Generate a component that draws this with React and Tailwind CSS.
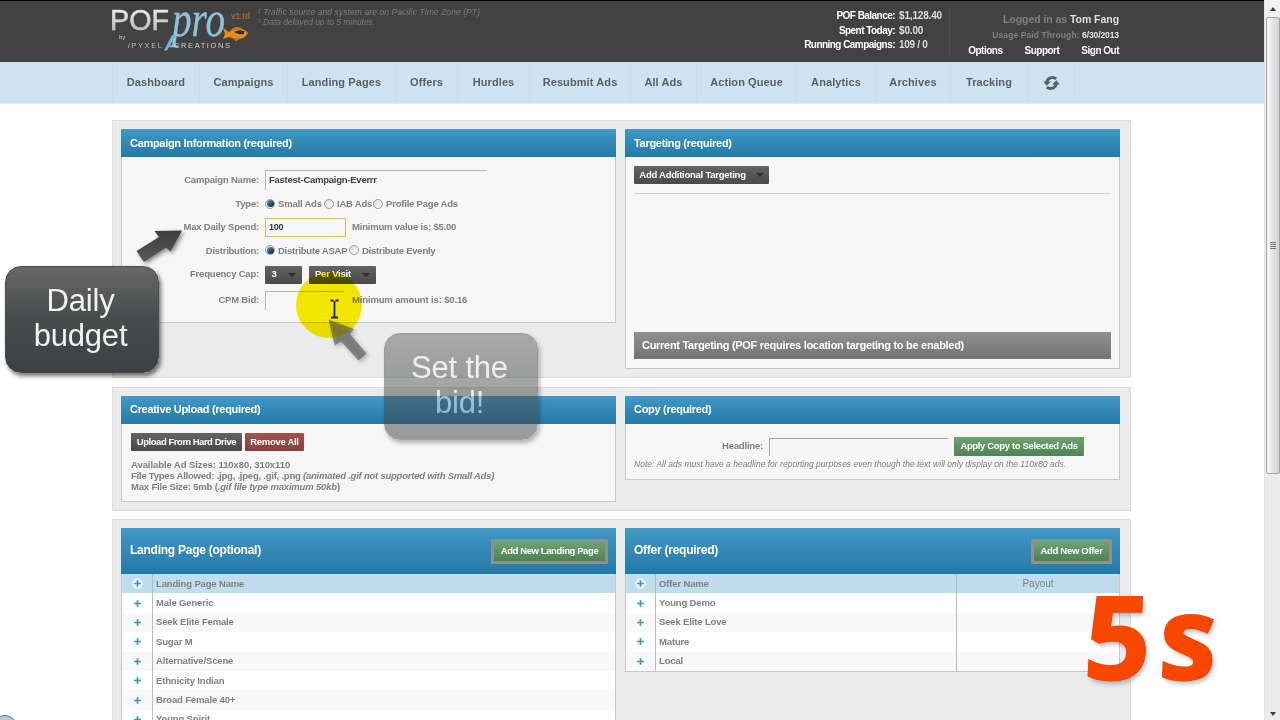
const NAV = [
    { label: "Dashboard", cls: "w-[87px]" },
    { label: "Campaigns", cls: "w-[88px]" },
    { label: "Landing Pages", cls: "w-[108px]" },
    { label: "Offers", cls: "w-[62px]" },
    { label: "Hurdles", cls: "w-[72px]" },
    { label: "Resubmit Ads", cls: "w-[101px]" },
    { label: "All Ads", cls: "w-[66px]" },
    { label: "Action Queue", cls: "w-[100px]" },
    { label: "Analytics", cls: "w-[79px]" },
    { label: "Archives", cls: "w-[75px]" },
    { label: "Tracking", cls: "w-[77px]" },
];

const LANDING_PAGES = ["Male Generic", "Seek Elite Female", "Sugar M", "Alternative/Scene", "Ethnicity Indian", "Broad Female 40+", "Young Spirit"];
const OFFERS = ["Young Demo", "Seek Elite Love", "Mature", "Local"];

function Logo() {
    return (
        <svg width="142" height="54" viewBox="0 0 142 54" className="shrink-0 overflow-visible">
            <defs>
                <linearGradient id="pof" x1="0" y1="0" x2="0" y2="1">
                    <stop offset="0" stopColor="#ffffff" />
                    <stop offset="1" stopColor="#a8a8a8" />
                </linearGradient>
            </defs>
            <text x="-2" y="28.5" fontFamily="Liberation Sans" fontSize="29" textLength="59" lengthAdjust="spacingAndGlyphs" fill="url(#pof)" stroke="#dddddd" strokeWidth="0.5">POF</text>
            <text x="60" y="35" fontFamily="Liberation Serif" fontStyle="italic" fontSize="50" textLength="53" lengthAdjust="spacingAndGlyphs" fill="#8fc3dc" stroke="#8fc3dc" strokeWidth="0.3">pro</text>
            <path d="M60 34 L52 49.500 L55 49.500 L64 34 Z" fill="#7db3cf" />
            <text x="119" y="18" fontFamily="Liberation Sans" fontSize="8.5" fontWeight="bold" textLength="19" lengthAdjust="spacingAndGlyphs" fill="#a8662c">v1.td</text>
            <text x="7" y="37.500" fontFamily="Liberation Sans" fontSize="6" fill="#d0d0d0">by</text>
            <text x="16" y="46.500" fontFamily="Liberation Sans" fontSize="7.5" textLength="34" fill="#bdbdbd"><tspan fontStyle="italic">i</tspan>PYXEL</text>
            <text x="62" y="46.500" fontFamily="Liberation Sans" fontSize="7.5" textLength="56" fill="#cfcfcf">CREATIONS</text>
            {/* fish */}
            <path d="M111 27 L117 31 C121 27 132 26 136 32 C134 37 127 40 117 36 L111 38 L113 33 Z" fill="#e38b22" />
            <path d="M118 30 Q124 23 131 28 Z M121 37 L129 37 L124 40.500 Z" fill="#c9731a" />
            <path d="M122 31 Q129 27 135 32 Q129 35 122 31 Z" fill="#3b2b1c" />
            <circle cx="133" cy="32" r="1" fill="#f4c26b" />
        </svg>
    );
}

function Header() {
    return (
        <header className="h-[62px] shrink-0 bg-[#424242] border-t border-black flex pl-[112px]">
            <Logo />
            <div className="w-[440px] pt-[6px] pl-[4px] text-[8.5px] leading-[10px] italic text-[#7c7c7c] tracking-[0.08px]">
                <p><sup className="text-[5px]">1</sup> Traffic source and system are on Pacific Time Zone (PT)</p>
                <p className="tracking-[-0.03px]"><sup className="text-[5px]">2</sup> Data delayed up to 5 minutes.</p>
            </div>
            <div className="pt-[8px] w-[255px] flex gap-1 text-[10px] leading-[14.7px] font-bold text-white whitespace-nowrap">
                <div className="w-[201px] text-right tracking-[-0.54px]">
                    <p>POF Balance:</p>
                    <p>Spent Today:</p>
                    <p>Running Campaigns:</p>
                </div>
                <div className="text-[#dedede] tracking-[-0.17px]">
                    <p>$1,128.40</p>
                    <p>$0.00</p>
                    <p className="tracking-[-0.3px]">109 / 0</p>
                </div>
            </div>
            <div className="h-[46px] mt-2 border-l border-[#4f4f4f]" />
            <div className="w-[169px] pt-[10px] text-right font-bold text-[#808080] whitespace-nowrap">
                <p className="text-[10.5px] leading-[16px] tracking-[-0.05px]">Logged in as <span className="text-[#dedede]">Tom Fang</span></p>
                <p className="text-[8.5px] leading-[16px] tracking-[0.1px]">Usage Paid Through: <span className="text-[#e4e4e4] tracking-[-0.1px]">6/30/2013</span></p>
                <div className="flex justify-end gap-[22px] text-[10px] leading-[15px] text-white tracking-[-0.5px]">
                    <span>Options</span>
                    <span>Support</span>
                    <span>Sign Out</span>
                </div>
            </div>
        </header>
    );
}

function RefreshIcon() {
    return (
        <svg width="17" height="14" viewBox="0 0 17 14" fill="none">
            <path d="M13.2 2.9 A5.6 5 0 0 0 3.800 6 M3.800 11.100 A5.600 5 0 0 0 13.200 8" stroke="#5c6063" strokeWidth="2.8" />
            <path d="M0.300 5.500 H8 L3.600 9.800 Z M9 8.500 H16.700 L13.400 4.200 Z" fill="#5c6063" />
        </svg>
    );
}

function Nav() {
    return (
        <nav className="h-[42px] shrink-0 bg-[#cde3f1] border-b border-[#dfebf2] flex pl-[112px] text-[11px] font-bold text-[#5c5f61] tracking-[0.1px]">
            {NAV.map(item => (
                <div key={item.label} className={`${item.cls} shrink-0 flex items-center justify-center border-l border-[#c8deec] whitespace-nowrap`}>
                    {item.label}
                </div>
            ))}
            <div className="w-[48px] flex items-center justify-center border-x border-[#c8deec]">
                <RefreshIcon />
            </div>
        </nav>
    );
}

function Section({ className = "", children }) {
    return (
        <section className={`w-[1019px] bg-[#ebebeb] border border-[#dcdcdc] pt-2 px-2 flex items-start gap-[9px] shrink-0 ${className}`}>
            {children}
        </section>
    );
}

function Panel({ title, className = "", titleClass = "", children }) {
    return (
        <div className={`w-[495px] bg-[#f6f6f6] border border-t-0 border-[#c6c8ca] ${className}`}>
            <h2 className={`-mx-px h-[28px] px-[9px] flex items-center bg-gradient-to-b from-[#4199c5] to-[#2579a8] text-white text-[11px] font-bold tracking-[-0.3px] ${titleClass}`}>{title}</h2>
            {children}
        </div>
    );
}

function Btn({ className = "", children }) {
    return (
        <span className={`inline-flex items-center justify-center h-[18px] rounded-[1px] text-white text-[9.5px] font-bold whitespace-nowrap ${className}`}>
            {children}
        </span>
    );
}

function Caret({ className = "" }) {
    return <span className={`border-x-4 border-x-transparent border-t-4 border-t-[#2c2c2c] ${className}`} />;
}

function Radio({ checked, className = "", children }) {
    return (
        <span className={`flex items-center gap-[3px] whitespace-nowrap ${className}`}>
            <span className="w-[10px] h-[10px] mb-[2px] shrink-0 rounded-full border border-[#9b9b9b] bg-gradient-to-br from-[#dcdcdc] to-white flex items-center justify-center">
                {checked && <span className="w-[7px] h-[7px] rounded-full bg-gradient-to-br from-[#5f9cc4] to-[#06192c]" />}
            </span>
            {children}
        </span>
    );
}

function Row({ label, className, children }) {
    return (
        <div className={`flex items-center ${className}`}>
            <label className="w-[137px] mr-[6px] text-right">{label}</label>
            {children}
        </div>
    );
}

function CampaignForm() {
    return (
        <div className="h-[165px] pt-[11px] text-[9.5px] font-bold text-[#808080] tracking-[-0.2px]">
            <Row label="Campaign Name:" className="h-[25px]">
                <div className="w-[222px] h-[20px] -mt-px border-t border-l border-[#b4b6b8] px-[3px] flex items-center text-[#3f4347] tracking-[-0.25px]">Fastest-Campaign-Everrr</div>
            </Row>
            <Row label="Type:" className="h-[23px]">
                <Radio checked className="w-[59px]">Small Ads</Radio>
                <Radio className="w-[49px]">IAB Ads</Radio>
                <Radio>Profile Page Ads</Radio>
            </Row>
            <Row label="Max Daily Spend:" className="h-[23px]">
                <div className="w-[81px] h-[19px] border border-[#dfb566] bg-[#f4f6fa] px-[3px] flex items-center text-[9px] text-[#33373b]">100</div>
                <span className="ml-[6px]">Minimum value is: $5.00</span>
            </Row>
            <Row label="Distribution:" className="h-[24px] tracking-[-0.25px]">
                <Radio checked className="w-[84px]">Distribute ASAP</Radio>
                <Radio>Distribute Evenly</Radio>
            </Row>
            <Row label="Frequency Cap:" className="h-[23px]">
                <Btn className="w-[37px] bg-gradient-to-b from-[#636363] to-[#4a4a4a]">3<Caret className="ml-[11px]" /></Btn>
                <Btn className="w-[67px] ml-[7px] bg-gradient-to-b from-[#636363] to-[#4a4a4a]">Per Visit<Caret className="ml-[11px]" /></Btn>
            </Row>
            <Row label="CPM Bid:" className="h-[29px]">
                <div className="w-[79px] h-[19px] border-t border-l border-[#b4b6b8]" />
                <span className="ml-[8px] tracking-[-0.15px]">Minimum amount is: $0.16</span>
            </Row>
        </div>
    );
}

function Plus({ ring }) {
    return (
        <svg width="11" height="11" viewBox="0 0 11 11">
            <circle cx="5.5" cy="5.5" r="5.2" fill={ring ? "#e6f4fb" : "#f4fafd"} />
            <path d="M5.5 2.2v6.6M2.2 5.5h6.6" stroke="#4a93b3" strokeWidth="1.7" />
        </svg>
    );
}

function ListPanel({ title, button, buttonClass, name, rows, payout, plusClass }) {
    return (
        <div className="w-[495px] text-[9.5px] font-bold text-[#808080] tracking-[-0.15px]">
            <div className="h-[46px] pl-[9px] pr-2 flex items-center justify-between bg-gradient-to-b from-[#4199c5] to-[#2579a8]">
                <h2 className="pb-[3px] text-white text-[12px] tracking-[-0.25px]">{title}</h2>
                <Btn className={`h-[25px] border-[3px] border-[#8d9190] bg-gradient-to-b from-[#6fa272] to-[#4f8253] ${buttonClass}`}>{button}</Btn>
            </div>
            <div className="border-x border-b border-[#c6c8ca]">
                {[name, ...rows].map((row, i) => (
                    <div key={row} className={`h-[19.4px] flex ${i === 0 ? "bg-[#c0dded]" : i % 2 ? "bg-white" : "bg-[#f8f8f8]"}`}>
                        <div className={`${plusClass} flex items-center justify-center border-r border-[#b6bcc0]`}><Plus ring={i === 0} /></div>
                        <div className="flex-1 pl-[3px] flex items-center">{row}</div>
                        {payout && <div className="w-[163px] border-l border-[#b6bcc0] flex items-center justify-center font-normal text-[10px] tracking-[0]">{i === 0 && payout}</div>}
                    </div>
                ))}
            </div>
        </div>
    );
}

function Scrollbar() {
    return (
        <div className="w-4 shrink-0 bg-[#ececec] border-l border-[#e2e2e2] flex flex-col items-center">
            <div className="h-[17px] w-full flex items-center justify-center bg-[#f1f1f1]"><span className="border-x-[3px] border-x-transparent border-b-4 border-b-[#3c3c3c]" /></div>
            <div className="h-[457px] w-[14px] rounded-[2px] border border-[#a2a2a2] bg-gradient-to-r from-[#f6f6f6] to-[#d2d2d2] flex flex-col items-center justify-center gap-px">
                <span className="w-[6px] h-px bg-[#777]" />
                <span className="w-[6px] h-px bg-[#777]" />
                <span className="w-[6px] h-px bg-[#777]" />
                <span className="w-[6px] h-px bg-[#777]" />
            </div>
            <div className="mt-auto h-3 flex items-center"><span className="border-x-[3px] border-x-transparent border-t-4 border-t-[#3c3c3c]" /></div>
        </div>
    );
}

function Callout({ className, children }) {
    return (
        <div className={`absolute w-[154px] h-[107px] rounded-[16px] bg-gradient-to-b from-[#686868] via-[#484b4c] to-[#3d4143] border border-[#4a4a4a] shadow-[2px_3px_4px_rgba(0,0,0,0.55)] flex items-center justify-center text-center text-[31px] leading-[35px] text-[#f2f2f2] tracking-[-0.2px] ${className}`}>
            <p className="pb-[3px] pr-[3px]">{children}</p>
        </div>
    );
}

// Walkthrough annotations that float over the form
function Annotations() {
    return (
        <>
            <div className="absolute left-[296px] top-[272px] w-[66px] h-[66px] rounded-full bg-[#fbee00] mix-blend-multiply blur-[0.6px]" />
            <svg width="400" height="380" viewBox="0 0 400 380" className="absolute left-0 top-0 drop-shadow-[2px_2px_2px_rgba(0,0,0,0.45)]">
                <defs>
                    <linearGradient id="arrow" x1="0" y1="0" x2="0" y2="1">
                        <stop offset="0" stopColor="#3d3d3d" />
                        <stop offset="1" stopColor="#5a5a5a" />
                    </linearGradient>
                </defs>
                <path d="M182 230.5 L154.5 231 L159 237 L136.500 251 L144 262 L166 247.500 L170.500 251.500 Z" fill="url(#arrow)" />
                <path d="M328.500 319.500 L354 329 L350 334 L366.500 353.500 L358.500 360.500 L341 341.500 L334.500 345.500 Z" fill="#4c4c4c" opacity="0.55" />
            </svg>
            <svg width="9" height="20" viewBox="0 0 9 20" className="absolute left-[330px] top-[299px]">
                <path d="M0.500 1.500 H3.500 M5.500 1.500 H8.500 M4.500 2 V18 M1 18.500 H8" stroke="#23245a" strokeWidth="1.800" fill="none" />
            </svg>
            <Callout className="left-[5px] top-[266px]">Daily<br />budget</Callout>
            <Callout className="left-[384px] top-[333px] opacity-50">Set the<br />bid!</Callout>
            <div className="absolute left-[1085px] top-[556px] -skew-x-[3deg] font-['Open_Sans'] text-[115px] leading-[158px] font-bold text-[#f84800] tracking-[9px] whitespace-nowrap [-webkit-text-stroke:2px_#f84800] [text-shadow:1px_1px_0_#c23700,3px_4px_4px_rgba(0,0,0,0.25)]">5s</div>
            <div className="absolute -left-[7px] top-[715px] w-[24px] h-[24px] rounded-full border border-[#5c7388] bg-[#b8cbdc]" />
        </>
    );
}

export default function App() {
    return (
        <div className="relative w-[1280px] h-[720px] overflow-hidden bg-white flex font-['Liberation_Sans',sans-serif]">
            <div className="w-[1264px] flex flex-col">
                <Header />
                <Nav />
                <main className="pt-4 pl-[112px] flex flex-col gap-[9px]">
                    <Section className="h-[258px]">
                        <Panel title="Campaign Information (required)"><CampaignForm /></Panel>
                        <Panel title="Targeting (required)" className="h-[240px]">
                            <div className="mx-2 pt-[9px] flex flex-col">
                                <Btn className="w-[135px] bg-gradient-to-b from-[#636363] to-[#4a4a4a] tracking-[-0.25px]">Add Additional Targeting<Caret className="ml-[10px]" /></Btn>
                                <div className="mt-[9px] h-[139px] border-t border-[#cfcfcf]" />
                                <div className="h-[27px] px-2 flex items-center bg-gradient-to-b from-[#8f8f8f] to-[#747474] text-white text-[11px] font-bold tracking-[-0.29px]">Current Targeting (POF requires location targeting to be enabled)</div>
                            </div>
                        </Panel>
                    </Section>
                    <Section className="h-[124px]">
                        <Panel title="Creative Upload (required)" titleClass="pb-px" className="h-[106px]">
                            <div className="pl-[9px] pt-[9px] flex gap-[3px]">
                                <Btn className="w-[111px] bg-gradient-to-b from-[#636363] to-[#4a4a4a] tracking-[-0.45px]">Upload From Hard Drive</Btn>
                                <Btn className="w-[59px] bg-gradient-to-b from-[#a1524c] to-[#85403b] tracking-[-0.3px]">Remove All</Btn>
                            </div>
                            <div className="pl-[9px] pt-[8px] text-[9.5px] leading-[11px] font-bold text-[#808080] tracking-[-0.23px]">
                                <p className="tracking-[-0.08px]">Available Ad Sizes: 110x80, 310x110</p>
                                <p>File Types Allowed: .jpg, .jpeg, .gif, .png <i>(animated .gif not supported with Small Ads)</i></p>
                                <p className="tracking-[-0.18px]">Max File Size: 5mb (<i>.gif file type maximum 50kb</i>)</p>
                            </div>
                        </Panel>
                        <Panel title="Copy (required)" titleClass="pb-px" className="h-[84px]">
                            <div className="pt-[13px] flex items-center text-[9.5px] font-bold text-[#808080]">
                                <label className="w-[137px] mr-[6px] text-right tracking-[-0.2px]">Headline:</label>
                                <div className="w-[179px] h-[18px] border-t border-l border-[#a0a3a6] bg-[#f4f5f9]" />
                                <Btn className="w-[130px] ml-[6px] h-[19px] bg-gradient-to-b from-[#6da271] to-[#508454] tracking-[-0.35px]">Apply Copy to Selected Ads</Btn>
                            </div>
                            <p className="pl-[8px] pt-[2px] text-[8.5px] leading-[12px] italic text-[#808080] tracking-[0.01px] whitespace-nowrap">Note: All ads must have a headline for reporting purposes even though the text will only display on the 110x80 ads.</p>
                        </Panel>
                    </Section>
                    <Section className="h-[240px] -mt-px">
                        <ListPanel title="Landing Page (optional)" button="Add New Landing Page" buttonClass="w-[117px] tracking-[-0.4px]" name="Landing Page Name" rows={LANDING_PAGES} plusClass="w-[31px]" />
                        <ListPanel title="Offer (required)" button="Add New Offer" buttonClass="w-[81px] tracking-[-0.3px]" name="Offer Name" rows={OFFERS} payout="Payout" plusClass="w-[30px]" />
                    </Section>
                </main>
            </div>
            <Scrollbar />
            <Annotations />
        </div>
    );
}
